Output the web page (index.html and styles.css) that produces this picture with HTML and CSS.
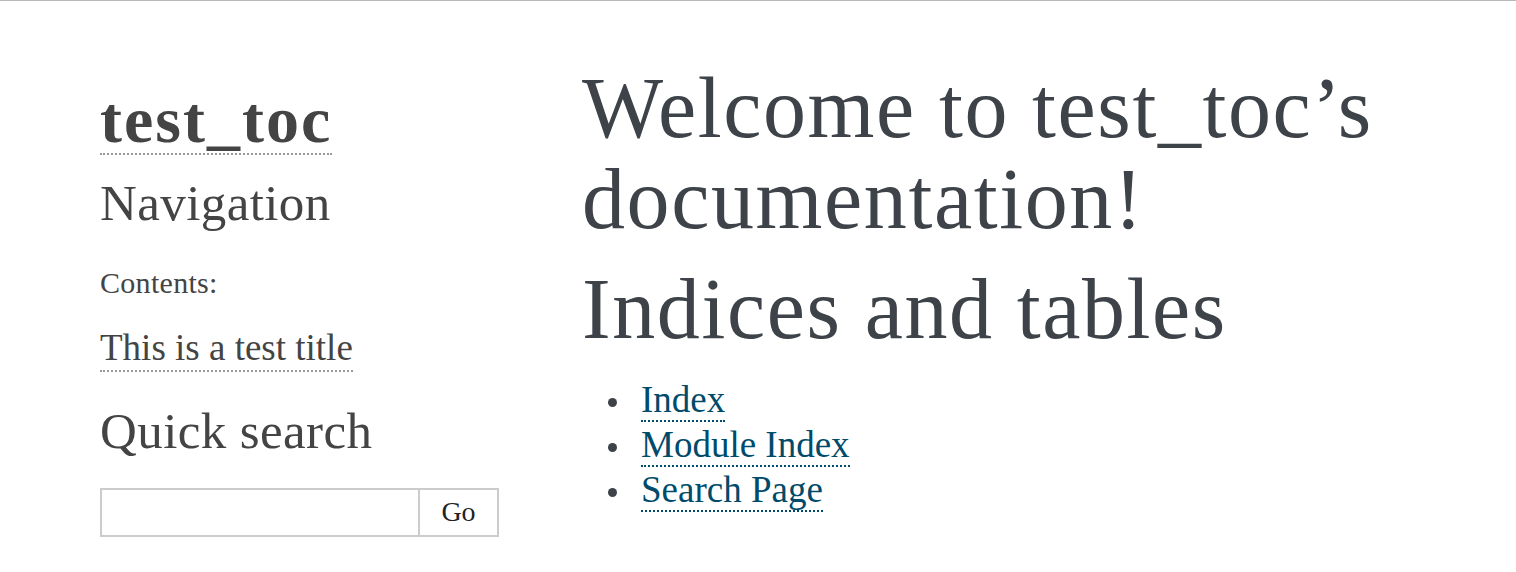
FILE: index.html
```html
<!DOCTYPE html>
<html lang="en">
<head>
<meta charset="utf-8">
<title>Welcome to test_toc’s documentation!</title>
<link rel="stylesheet" href="styles.css">
</head>
<body>
<div class="page">
  <div class="sidebar">
    <a class="logo" href="#">test_toc</a>
    <h3 class="side-heading">Navigation</h3>
    <p class="caption">Contents:</p>
    <a class="toc-link" href="#">This is a test title</a>
    <h3 class="side-heading search-heading">Quick search</h3>
    <form class="searchbox">
      <input class="search-input" type="text" aria-label="search">
      <button class="search-go" type="button">Go</button>
    </form>
  </div>
  <div class="main">
    <h1 class="title">Welcome to test_toc’s documentation!</h1>
    <h2 class="title subtitle">Indices and tables</h2>
    <ul class="index-list">
      <li><a href="#">Index</a></li>
      <li><a href="#">Module Index</a></li>
      <li><a href="#">Search Page</a></li>
    </ul>
  </div>
</div>
</body>
</html>
```
FILE: styles.css
```css
html, body {
  margin: 0;
  padding: 0;
  background: #ffffff;
}

body {
  border-top: 1px solid #b8b8b8;
  font-family: "Liberation Serif", "DejaVu Serif", serif;
  color: #3e4349;
}

.page {
  display: flex;
  padding-left: 100px;
}

/* ---------- sidebar ---------- */
.sidebar {
  flex: none;
  width: 482px;
  display: flex;
  flex-direction: column;
  align-items: flex-start;
  padding-top: 87.4px;
  color: #444444;
}

.logo {
  font-size: 66px;
  font-weight: bold;
  line-height: 64.6px;
  letter-spacing: 2px;
  color: #444444;
  text-decoration: none;
  border-bottom: 2px dotted #999999;
}

.side-heading {
  margin: 19px 0 0 0;
  font-size: 51px;
  font-weight: normal;
  line-height: 58px;
  letter-spacing: 0.4px;
  color: #444444;
}

.search-heading {
  margin-top: 30px;
}

.caption {
  margin: 33px 0 0 0;
  font-size: 30px;
  line-height: 36px;
  letter-spacing: 0.3px;
  color: #444444;
}

.toc-link {
  margin-top: 24px;
  font-size: 37px;
  line-height: 45px;
  letter-spacing: 0;
  color: #444444;
  text-decoration: none;
  border-bottom: 2px dotted #999999;
}

.searchbox {
  margin: 28px 0 0 0;
  display: flex;
  height: 49px;
}

.search-input {
  box-sizing: border-box;
  width: 320px;
  height: 49px;
  margin: 0;
  padding: 0 8px;
  border: 2px solid #cccccc;
  background: #ffffff;
  font-family: "Liberation Serif", serif;
  font-size: 28px;
  outline: none;
}

.search-go {
  box-sizing: border-box;
  width: 79px;
  height: 49px;
  margin: 0;
  padding: 0;
  border: 2px solid #cccccc;
  border-left: none;
  background: #ffffff;
  font-family: "Liberation Serif", serif;
  font-size: 28px;
  color: #222222;
}

/* ---------- main ---------- */
.main {
  flex: 1;
  padding-top: 61.5px;
}

.title {
  margin: 0;
  font-size: 86px;
  font-weight: normal;
  line-height: 91px;
  letter-spacing: 1.6px;
  color: #3e4349;
}

.subtitle {
  margin-top: 19px;
}

.index-list {
  margin: 22.5px 0 0 0;
  padding: 0 0 0 59px;
  list-style: none;
}

.index-list li {
  font-size: 37px;
  line-height: 45px;
}

.index-list li::before {
  content: "";
  display: inline-block;
  width: 9px;
  height: 9px;
  border-radius: 50%;
  background: #3e4349;
  margin-left: -33.5px;
  margin-right: 24.5px;
  vertical-align: 5.5px;
}

.index-list a {
  color: #004b6b;
  text-decoration: none;
  border-bottom: 2px dotted #004b6b;
}
```
